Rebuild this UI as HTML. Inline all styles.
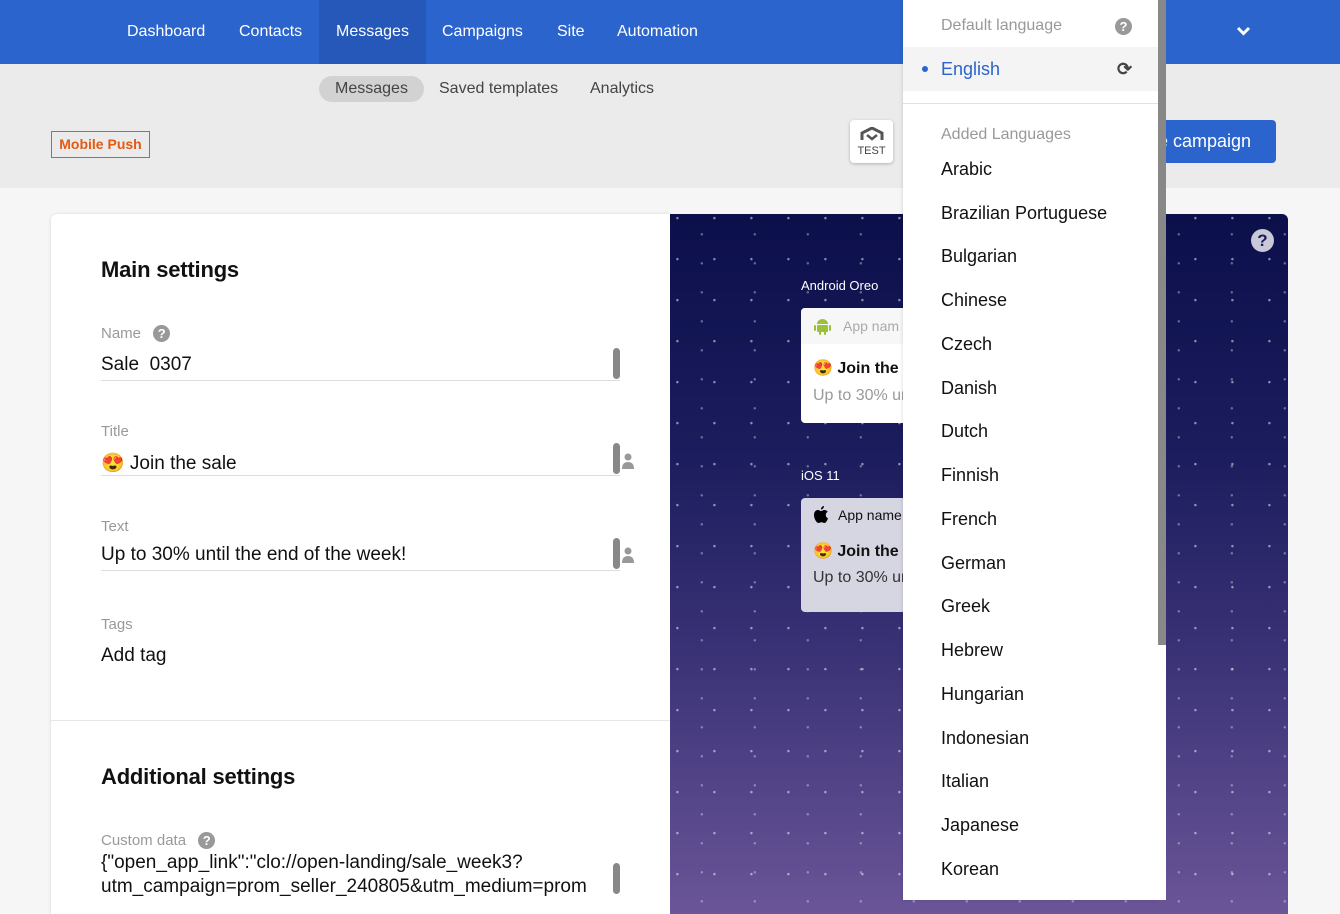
<!DOCTYPE html>
<html><head><meta charset="utf-8"><style>
*{box-sizing:border-box;margin:0;padding:0}
body{width:1340px;height:900px;overflow:hidden;font-family:"Liberation Sans",Roboto,sans-serif;background:#f6f6f6;position:relative}
.nav{position:absolute;left:0;top:0;width:1340px;height:64px;background:#2b64cc}
.nav a{position:absolute;top:0;height:64px;line-height:64px;color:#fff;font-size:16px;text-decoration:none}
.sub{position:absolute;top:64px;left:0;width:1340px;height:124px;background:#ebebeb}
.pill{position:absolute;top:76px;height:26px;line-height:26px;font-size:16px;color:#444}
.card{position:absolute;left:51px;top:214px;width:619px;height:700px;background:#fff;border-radius:6px 0 0 0;box-shadow:0 0 3px rgba(0,0,0,.12)}
.lbl{position:absolute;left:101px;font-size:15px;color:#999}
.val{position:absolute;left:101px;font-size:19px;color:#111}
.line{position:absolute;left:101px;width:519px;height:1px;background:#ddd}
.bar{position:absolute;left:613px;width:7px;height:31px;border-radius:4px;background:#888}
.person{position:absolute;left:622px;width:12px;height:16px}
.q{display:inline-block;width:17px;height:17px;border-radius:50%;background:#999;color:#fff;font-size:13px;font-weight:bold;text-align:center;line-height:17px}
.prev{position:absolute;left:670px;top:214px;width:618px;height:700px;border-radius:0 6px 0 0;background:
radial-gradient(circle at 20% 10%,rgba(255,255,255,.5) 0 1px,transparent 1.5px) 0 0/37px 41px,
radial-gradient(circle at 60% 70%,rgba(255,255,255,.35) 0 1px,transparent 1.5px) 0 0/53px 29px,
linear-gradient(180deg,#0b0f4a 0%,#1c1d5e 35%,#3d3478 65%,#6a5598 100%);overflow:hidden}
.dd{position:absolute;left:903px;top:0;width:255px;height:900px;background:#fff;box-shadow:-1px 0 3px rgba(0,0,0,.1)}
.lang{position:absolute;left:38px;font-size:18px;color:#111}
.notif{position:absolute;left:131px;width:110px;border-radius:4px;overflow:hidden}
h2{position:absolute;left:101px;font-size:22px;color:#111;font-weight:bold;letter-spacing:-.2px}
</style></head><body>
<div class="nav">
<a style="left:127px">Dashboard</a>
<a style="left:239px">Contacts</a>
<a style="left:319px;width:107px;background:#2558b8;text-align:center">Messages</a>
<a style="left:442px">Campaigns</a>
<a style="left:557px">Site</a>
<a style="left:617px">Automation</a>
<svg style="position:absolute;left:1236px;top:26px" width="15" height="11" viewBox="0 0 15 11"><path d="M2 2l5.5 5.5L13 2" stroke="#fff" stroke-width="3" fill="none"/></svg>
</div>
<div class="sub"></div>
<div class="pill" style="left:319px;width:105px;background:#d2d2d2;border-radius:13px;text-align:center">Messages</div>
<div class="pill" style="left:439px">Saved templates</div>
<div class="pill" style="left:590px">Analytics</div>
<div style="position:absolute;left:51px;top:131px;width:99px;height:27px;border:1px solid #e05a1a;color:#e8580f;font-weight:bold;font-size:14px;line-height:25px;text-align:center">Mobile Push</div>
<div style="position:absolute;left:850px;top:120px;width:43px;height:43px;background:#fff;border-radius:4px;box-shadow:0 1px 3px rgba(0,0,0,.25);text-align:center">
<svg style="margin-top:7px" width="26" height="14" viewBox="0 0 26 14"><path d="M3 13V6L13 1l10 5v7" stroke="#555" stroke-width="3" fill="none"/><path d="M8 8l5 4 5-4" stroke="#555" stroke-width="2.5" fill="none"/></svg>
<div style="font-size:11px;color:#444;line-height:10px">TEST</div></div>
<div style="position:absolute;left:1130px;top:120px;width:146px;height:43px;background:#2b64cc;border-radius:4px;color:#fff;font-size:18px;line-height:42px;padding-left:28px">e campaign</div>

<div class="card"></div>
<h2 style="top:257px">Main settings</h2>
<div class="lbl" style="top:325px">Name <span class="q" style="margin-left:8px">?</span></div>
<div class="val" style="top:354px">Sale&nbsp; 0307</div>
<div class="line" style="top:380px"></div><div class="bar" style="top:348px"></div>
<div class="lbl" style="top:423px">Title</div>
<div class="val" style="top:451px">😍 Join the sale</div>
<div class="line" style="top:475px"></div><div class="bar" style="top:443px"></div>
<svg class="person" style="top:453px" viewBox="0 0 12 16"><circle cx="6" cy="4" r="3.5" fill="#999"/><path d="M0 16q0-7 6-7t6 7z" fill="#999"/></svg>
<div class="lbl" style="top:518px">Text</div>
<div class="val" style="top:544px">Up to 30% until the end of the week!</div>
<div class="line" style="top:570px"></div><div class="bar" style="top:538px"></div>
<svg class="person" style="top:547px" viewBox="0 0 12 16"><circle cx="6" cy="4" r="3.5" fill="#999"/><path d="M0 16q0-7 6-7t6 7z" fill="#999"/></svg>
<div class="lbl" style="top:616px">Tags</div>
<div class="val" style="top:645px">Add tag</div>
<div style="position:absolute;left:51px;top:720px;width:619px;height:1px;background:#e6e6e6"></div>
<h2 style="top:764px">Additional settings</h2>
<div class="lbl" style="top:832px">Custom data <span class="q" style="margin-left:8px">?</span></div>
<div class="val" style="top:851px;line-height:24px">{"open_app_link":"clo://open-landing/sale_week3?<br>utm_campaign=prom_seller_240805&amp;utm_medium=prom</div>
<div class="bar" style="top:863px"></div>

<div class="prev">
<div style="position:absolute;left:131px;top:64px;color:#fff;font-size:13px">Android Oreo</div>
<div class="notif" style="top:94px;height:115px;background:#fff">
<div style="height:36px;background:#f7f7f7;font-size:14px;color:#aaa;line-height:36px;padding-left:42px;position:relative">
<svg style="position:absolute;left:12px;top:9px" width="19" height="19" viewBox="0 0 19 19"><path d="M4 7a5.5 5 0 0 1 11 0z" fill="#9bc13b"/><rect x="4" y="8" width="11" height="7" rx="1" fill="#9bc13b"/><rect x="1" y="8" width="2" height="6" rx="1" fill="#9bc13b"/><rect x="16" y="8" width="2" height="6" rx="1" fill="#9bc13b"/><rect x="6" y="14" width="2" height="4" rx="1" fill="#9bc13b"/><rect x="11" y="14" width="2" height="4" rx="1" fill="#9bc13b"/></svg>App nam</div>
<div style="padding:14px 0 0 12px;font-size:16px;color:#111;font-weight:bold">😍 Join the</div>
<div style="padding:9px 0 0 12px;font-size:16px;color:#999">Up to 30% ur</div></div>
<div style="position:absolute;left:131px;top:254px;color:#fff;font-size:13px">iOS 11</div>
<div class="notif" style="top:284px;height:114px;background:#d6d6e2">
<div style="padding:9px 0 0 12px;font-size:14px;color:#111;position:relative;padding-left:37px">
<svg style="position:absolute;left:12px;top:8px" width="16" height="18" viewBox="0 0 16 18"><path d="M11 0c0 2-1.5 3.5-3 3.5C8 1.5 9.5 0 11 0zM8 5c1 0 2-1 3.5-1 1.2 0 2.5.7 3.2 1.8-2.8 1.5-2.4 5.5.3 6.5-.7 2-2 4.7-3.5 4.7-1.2 0-1.5-.7-3-.7s-1.9.7-3 .7C3.500 17 1 12.5 1 9s2-5 4-5c1.300 0 2 1 3 1z" fill="#000"/></svg>App name</div>
<div style="padding:18px 0 0 12px;font-size:16px;color:#111;font-weight:bold">😍 Join the</div>
<div style="padding:8px 0 0 12px;font-size:16px;color:#333">Up to 30% ur</div></div>
<div style="position:absolute;left:581px;top:15px;width:23px;height:23px;border-radius:50%;background:#c8c8d8;color:#1a1d5a;font-weight:bold;font-size:17px;text-align:center;line-height:23px">?</div>
</div>

<div class="dd">
<div style="position:absolute;left:38px;top:17px;font-size:16px;color:#999">Default language</div>
<span class="q" style="position:absolute;left:212px;top:18px">?</span>
<div style="position:absolute;left:0;top:47px;width:255px;height:44px;background:#f4f4f4"></div>
<div style="position:absolute;left:19px;top:66px;width:6px;height:6px;border-radius:50%;background:#2b64cc"></div>
<div class="lang" style="top:59px;color:#2b64cc">English</div>
<div style="position:absolute;left:214px;top:59px;font-size:18px;color:#444;font-weight:bold">⟳</div>
<div style="position:absolute;left:0;top:103px;width:255px;height:1px;background:#e2e2e2"></div>
<div style="position:absolute;left:38px;top:126px;font-size:16px;color:#999">Added Languages</div>
<div class="lang" style="top:159px">Arabic</div>
<div class="lang" style="top:203px">Brazilian Portuguese</div>
<div class="lang" style="top:246px">Bulgarian</div>
<div class="lang" style="top:290px">Chinese</div>
<div class="lang" style="top:334px">Czech</div>
<div class="lang" style="top:378px">Danish</div>
<div class="lang" style="top:421px">Dutch</div>
<div class="lang" style="top:465px">Finnish</div>
<div class="lang" style="top:509px">French</div>
<div class="lang" style="top:553px">German</div>
<div class="lang" style="top:596px">Greek</div>
<div class="lang" style="top:640px">Hebrew</div>
<div class="lang" style="top:684px">Hungarian</div>
<div class="lang" style="top:728px">Indonesian</div>
<div class="lang" style="top:771px">Italian</div>
<div class="lang" style="top:815px">Japanese</div>
<div class="lang" style="top:859px">Korean</div>
</div>
<div style="position:absolute;left:1158px;top:0;width:8px;height:645px;background:#888"></div>
<div style="position:absolute;left:1158px;top:645px;width:8px;height:255px;background:#fff"></div>
</body></html>
